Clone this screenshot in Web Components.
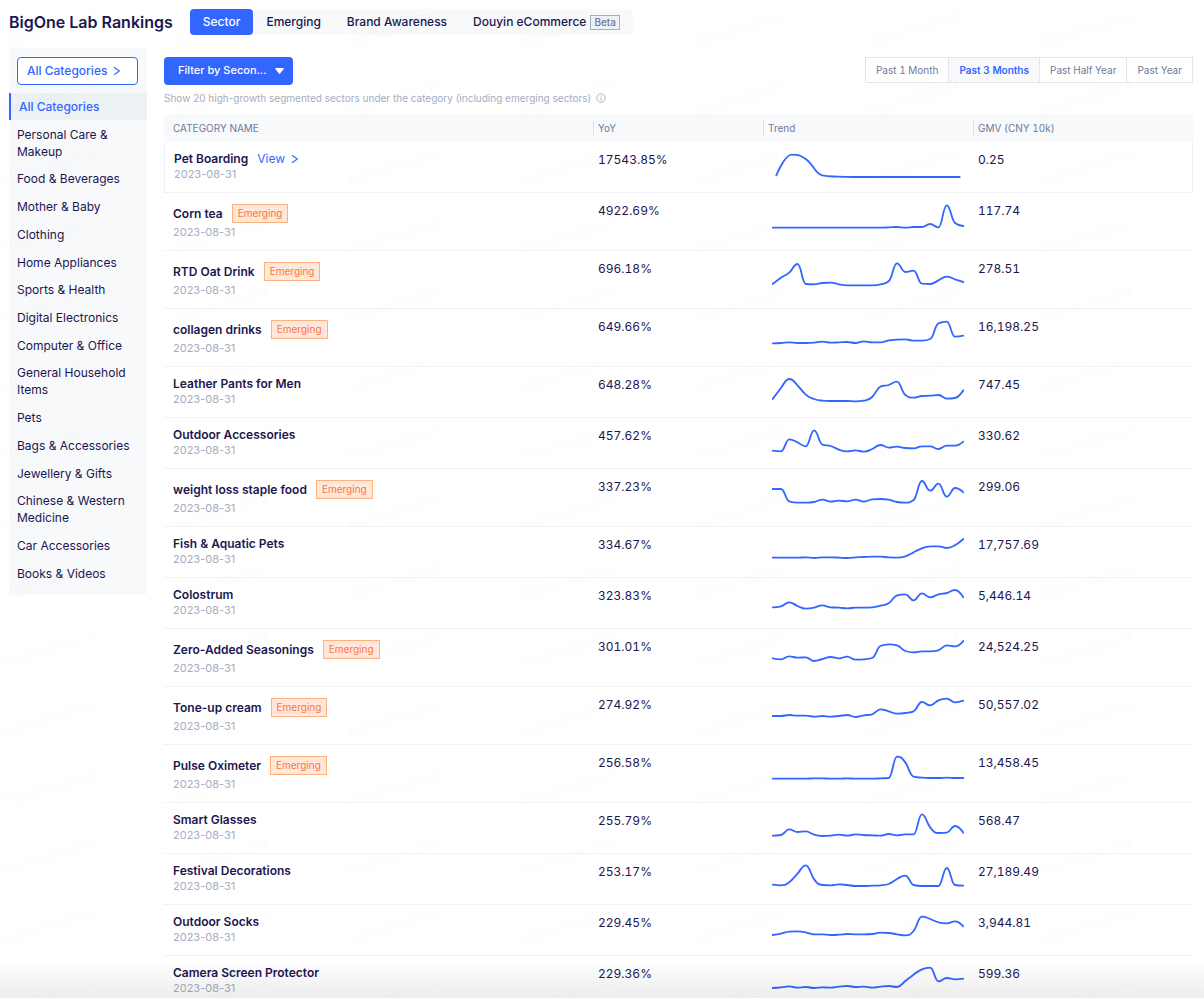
<!DOCTYPE html>
<html lang="en">
<head>
<meta charset="UTF-8">
<meta name="viewport" content="width=device-width, initial-scale=1">
<title>BigOne Lab Rankings</title>
<style>
  :root {
    --primary: #3366ff;
    --text: #1c1650;
    --text-muted: #6e7a9a;
    --text-light: #a6adc2;
    --surface: #f7f9fb;
    --line: #f0f2f5;
  }

  body {
    margin: 0;
    background: #fff;
    color: var(--text);
    font: 12px/16px Inter, "Liberation Sans", sans-serif;
  }
</style>
</head>
<body>
<rankings-page>
  <page-tabs slot="header"></page-tabs>
  <category-menu slot="sidebar"></category-menu>
  <sector-filter slot="toolbar"></sector-filter>
  <period-picker slot="toolbar"></period-picker>
  <ranking-table></ranking-table>
</rankings-page>

<script>
/**
 * RankingsPage
 *
 * Page shell: title and tabs on top, category menu on the left,
 * toolbar, hint and ranking table on the right.
 *
 * Slots: header, sidebar, toolbar, (default)
 */
class RankingsPage extends HTMLElement {
  constructor() {
    super();
    this.attachShadow({ mode: "open" });
  }

  connectedCallback() {
    this.shadowRoot.innerHTML = `
      <style>
        :host {
          display: block;
          position: relative;
          height: 100vh;
          overflow: hidden;
        }

        header {
          display: flex;
          align-items: center;
          gap: 17px;
          padding: 9px 9px 12px;
        }

        h1 {
          margin: 0;
          font-size: 16px;
          line-height: 26px;
          font-weight: 600;
          white-space: nowrap;
        }

        .layout {
          display: grid;
          grid-template-columns: 138px minmax(0, 1fr);
          align-items: start;
          gap: 17px;
          padding: 1px 11px 0 9px;
        }

        main {
          padding-top: 9px;
        }

        .toolbar {
          display: flex;
          justify-content: space-between;
          align-items: flex-start;
        }

        .hint {
          display: flex;
          align-items: center;
          gap: 5px;
          margin: 5px 0 8px;
          color: var(--text-light);
          font-size: 10px;
        }

        .watermark {
          position: absolute;
          inset: 0;
          width: 100%;
          height: 100%;
          pointer-events: none;
        }

        .fade {
          position: absolute;
          inset: auto 0 0;
          height: 40px;
          background: linear-gradient(rgba(0, 0, 0, 0), rgba(0, 0, 0, 0.07));
          pointer-events: none;
        }
      </style>

      <header>
        <h1>BigOne Lab Rankings</h1>
        <slot name="header"></slot>
      </header>
      <div class="layout">
        <slot name="sidebar"></slot>
        <main>
          <div class="toolbar"><slot name="toolbar"></slot></div>
          <p class="hint">
            Show 20 high-growth segmented sectors under the category (including emerging sectors)
            <svg width="10" height="10" viewBox="0 0 10 10" fill="none" stroke="currentColor" aria-hidden="true">
              <circle cx="5" cy="5" r="4.2" stroke-width="0.9"/>
              <path d="M5 4.4v3M5 2.5v1" stroke-width="0.9"/>
            </svg>
          </p>
          <slot></slot>
        </main>
      </div>
      <svg class="watermark" aria-hidden="true">
        <pattern id="mark" width="173" height="69" patternUnits="userSpaceOnUse">
          <text x="4" y="46" transform="rotate(-16 4 46)" font-family="Liberation Serif" font-size="15" fill="#000" fill-opacity="0.01">bigonelab@814</text>
        </pattern>
        <rect width="100%" height="100%" fill="url(#mark)"/>
      </svg>
      <div class="fade"></div>
    `;
  }
}

/**
 * PageTabs
 *
 * Top level navigation between the rankings.
 */
class PageTabs extends HTMLElement {
  constructor() {
    super();
    this.attachShadow({ mode: "open" });
  }

  connectedCallback() {
    this.shadowRoot.innerHTML = `
      <style>
        :host {
          display: block;
        }

        nav {
          display: flex;
          background: var(--surface);
          border-radius: 4px;
        }

        a {
          display: flex;
          align-items: center;
          gap: 4px;
          padding: 0 13px;
          line-height: 26px;
          color: inherit;
          font-weight: 500;
          text-decoration: none;
          white-space: nowrap;
        }

        a.active {
          background: var(--primary);
          color: #fff;
          border-radius: 4px;
        }

        .beta {
          padding: 0 3px;
          border: 1px solid #a3aec4;
          background: #eef1f7;
          color: var(--text-muted);
          font-size: 10px;
          line-height: 13px;
        }
      </style>

      <nav>
        <a class="active" href="#sector">Sector</a>
        <a href="#emerging">Emerging</a>
        <a href="#brand">Brand Awareness</a>
        <a href="#douyin">Douyin eCommerce <span class="beta">Beta</span></a>
      </nav>
    `;
  }
}

const CATEGORIES = [
  "All Categories",
  "Personal Care & Makeup",
  "Food & Beverages",
  "Mother & Baby",
  "Clothing",
  "Home Appliances",
  "Sports & Health",
  "Digital Electronics",
  "Computer & Office",
  "General Household Items",
  "Pets",
  "Bags & Accessories",
  "Jewellery & Gifts",
  "Chinese & Western Medicine",
  "Car Accessories",
  "Books & Videos",
];

/**
 * CategoryMenu
 *
 * Sidebar with the list of first level categories.
 */
class CategoryMenu extends HTMLElement {
  constructor() {
    super();
    this.attachShadow({ mode: "open" });
  }

  connectedCallback() {
    const items = CATEGORIES.map(
      (name, i) => `<li><a href="#"${i === 0 ? ' class="active"' : ""}>${name.replace("&", "&amp;")}</a></li>`
    ).join("");

    this.shadowRoot.innerHTML = `
      <style>
        :host {
          display: block;
          padding: 9px 0 8px;
          background: var(--surface);
          border-radius: 4px;
        }

        button {
          display: flex;
          align-items: center;
          gap: 6px;
          width: 121px;
          height: 28px;
          margin: 0 8px 8px;
          padding: 0 9px;
          border: 1px solid var(--primary);
          border-radius: 4px;
          background: #fff;
          color: var(--primary);
          font: inherit;
          font-weight: 500;
          white-space: nowrap;
        }

        ul {
          display: flex;
          flex-direction: column;
          justify-content: space-between;
          min-height: 494px;
          margin: 0;
          padding: 0;
          list-style: none;
        }

        a {
          display: block;
          padding: 5px 8px;
          line-height: 17px;
          color: inherit;
          text-decoration: none;
        }

        a.active {
          border-left: 2px solid var(--primary);
          background: #ecf1f4;
          color: var(--primary);
          font-weight: 500;
        }
      </style>

      <button type="button">
        All Categories
        <svg width="8" height="10" viewBox="0 0 8 10" fill="none" stroke="currentColor" stroke-width="1.1" aria-hidden="true">
          <path d="M1 1.2L6.4 5L1 8.8"/>
        </svg>
      </button>
      <ul>${items}</ul>
    `;
  }
}

/**
 * SectorFilter
 *
 * Drop-down to filter the table by second level category.
 */
class SectorFilter extends HTMLElement {
  constructor() {
    super();
    this.attachShadow({ mode: "open" });
  }

  connectedCallback() {
    this.shadowRoot.innerHTML = `
      <style>
        :host {
          display: grid;
          grid-template-columns: 129px;
          align-items: center;
          color: #fff;
        }

        select,
        svg {
          grid-area: 1 / 1;
        }

        select {
          appearance: none;
          height: 28px;
          padding: 0 26px 2px 14px;
          border: 0;
          border-radius: 4px;
          background: var(--primary);
          color: inherit;
          font: inherit;
          font-size: 11px;
          font-weight: 500;
        }

        svg {
          justify-self: end;
          margin-right: 9px;
          pointer-events: none;
        }
      </style>

      <select aria-label="Filter by second level category">
        <option>Filter by Secon...</option>
      </select>
      <svg width="9" height="6" viewBox="0 0 9 6" fill="currentColor" aria-hidden="true">
        <path d="M.8 0h7.4c.6 0 .8.6.4 1L5.1 5.4c-.3.4-.9.4-1.2 0L.4 1C0 .6.2 0 .8 0z"/>
      </svg>
    `;
  }
}

/**
 * PeriodPicker
 *
 * Group of buttons for the period of the ranking.
 */
class PeriodPicker extends HTMLElement {
  constructor() {
    super();
    this.attachShadow({ mode: "open" });
  }

  connectedCallback() {
    this.shadowRoot.innerHTML = `
      <style>
        :host {
          display: flex;
          border: 1px solid #e2e5ec;
        }

        button {
          height: 24px;
          padding: 0 10px;
          border: 0;
          border-left: 1px solid #e2e5ec;
          background: #fff;
          color: var(--text-muted);
          font: inherit;
          font-size: 10px;
          font-variant-numeric: tabular-nums;
          white-space: nowrap;
        }

        button:first-of-type {
          border-left: 0;
        }

        button[aria-pressed="true"] {
          background: var(--surface);
          color: var(--primary);
          font-weight: 600;
        }
      </style>

      <button type="button" aria-pressed="false">Past 1 Month</button>
      <button type="button" aria-pressed="true">Past 3 Months</button>
      <button type="button" aria-pressed="false">Past Half Year</button>
      <button type="button" aria-pressed="false">Past Year</button>
    `;
  }
}

const clampBetween = (value, a, b) => Math.min(Math.max(value, Math.min(a, b)), Math.max(a, b));

/**
 * TrendLine
 *
 * Smooth sparkline without axes.
 *
 * Attributes:
 * - points: comma separated heights, measured from the top of the drawing
 * - inset: (optional) space left free at both ends of the line
 */
class TrendLine extends HTMLElement {
  constructor() {
    super();
    this.attachShadow({ mode: "open" });
  }

  connectedCallback() {
    this.shadowRoot.innerHTML = `
      <style>
        :host {
          display: block;
        }

        svg {
          display: block;
        }
      </style>
      <svg width="192" height="40" viewBox="0 0 576 120" fill="none" stroke="#3366ff" stroke-width="5.5" stroke-linecap="round" stroke-linejoin="round" aria-hidden="true">
        <path d="${this.buildPath()}"/>
      </svg>
    `;
  }

  // Bezier through all the points, the handles never leave the range of their segment
  buildPath() {
    const inset = Number(this.getAttribute("inset") || 0);
    const ys = this.getAttribute("points").split(",").map(Number);
    const last = ys.length - 1;
    const step = (572 - inset * 2) / last;
    const reach = step * 0.45;

    const rises = ys.map((y, i) => {
      if (i === 0 || i === last) return 0;
      const after = clampBetween(y + (ys[i + 1] - ys[i - 1]) / 4, y, ys[i + 1]);
      const before = clampBetween(y - (after - y), ys[i - 1], y);
      return y - before;
    });

    let d = `M${2 + inset} ${ys[0]}`;
    for (let i = 1; i <= last; i++) {
      const x = 2 + inset + step * i;
      // the ends have no neighbour, so their handle stays on the point
      const out = i === 1 ? 0 : reach;
      const back = i === last ? 0 : reach;
      d += ` C${x - step + out} ${ys[i - 1] + rises[i - 1]} ${x - back} ${ys[i] - rises[i]} ${x} ${ys[i]}`;
    }
    return d;
  }
}

const DATE = "2023-08-31";

const SECTORS = [
  { name: "Pet Boarding", view: true, yoy: "17543.85%", gmv: "0.25",
    trend: "100,38,54,100,104,105,105,105,105,105,105,105,105" },
  { name: "Corn tea", emerging: true, yoy: "4922.69%", gmv: "117.74",
    trend: "104,104,104,104,104,104,104,104,104,104,104,104,104,104,103,102,104,102,102,93,103,37,90,99" },
  { name: "RTD Oat Drink", emerging: true, yoy: "696.18%", gmv: "278.51",
    trend: "99,80,65,39,99,100,96,95,100,103,103,103,103,100,91,37,63,59,98,99,88,77,85,93" },
  { name: "collagen drinks", emerging: true, yoy: "649.66%", gmv: "16,198.25",
    trend: "103,102,100,102,102,101,98,101,100,99,102,97,100,100,94,92,91,95,95,90,43,38,83,80" },
  { name: "Leather Pants for Men", yoy: "648.28%", gmv: "747.45",
    trend: "96,63,36,55,83,96,101,102,102,102,103,101,90,59,54,44,84,92,87,86,84,95,93,70" },
  { name: "Outdoor Accessories", yoy: "457.62%", gmv: "330.62",
    trend: "98,100,64,73,85,37,80,84,95,100,97,101,93,81,89,86,90,91,85,85,93,83,83,71" },
  { name: "weight loss staple food", emerging: true, yoy: "337.23%", gmv: "299.06",
    trend: "60,60,97,101,101,99,92,98,95,97,92,98,91,90,92,99,101,93,36,65,44,83,57,70" },
  { name: "Fish & Aquatic Pets", yoy: "334.67%", gmv: "17,757.69",
    trend: "92,92,92,92,91,93,91,91,92,93,91,90,89,89,91,92,88,76,64,58,58,63,55,36" },
  { name: "Colostrum", yoy: "323.83%", gmv: "5,446.14",
    trend: "88,85,73,84,92,89,82,88,89,91,89,89,88,83,76,52,49,67,46,58,49,45,36,58" },
  { name: "Zero-Added Seasonings", emerging: true, yoy: "301.01%", gmv: "24,524.25",
    trend: "88,91,82,86,85,96,90,84,88,83,92,91,87,51,46,49,66,70,67,67,64,49,52,36" },
  { name: "Tone-up cream", emerging: true, yoy: "274.92%", gmv: "50,557.02",
    trend: "87,87,84,86,86,89,87,89,87,84,90,85,82,67,73,80,78,73,45,55,40,35,46,41" },
  { name: "Pulse Oximeter", emerging: true, yoy: "256.58%", gmv: "13,458.45",
    trend: "101,101,101,101,101,100,100,101,101,100,101,101,101,100,99,35,52,95,98,99,99,98,99,99" },
  { name: "Smart Glasses", yoy: "255.79%", gmv: "568.47",
    trend: "98,96,79,87,85,95,99,98,95,98,94,96,97,98,93,97,94,94,34,73,90,89,69,89" },
  { name: "Festival Decorations", yoy: "253.17%", gmv: "27,189.49",
    trend: "92,94,85,59,34,76,93,94,91,93,96,96,95,94,90,75,65,93,96,96,96,42,93,95" },
  { name: "Outdoor Socks", yoy: "229.45%", gmv: "3,944.81",
    trend: "90,86,80,79,82,88,88,90,89,87,88,88,87,83,84,88,91,78,35,42,52,55,49,64" },
  { name: "Camera Screen Protector", yoy: "229.36%", gmv: "599.36",
    trend: "96,94,91,95,93,96,94,95,92,90,93,92,95,92,90,93,75,56,40,35,76,66,70,68" },
];

/**
 * RankingTable
 *
 * Table of the fastest growing sectors.
 */
class RankingTable extends HTMLElement {
  constructor() {
    super();
    this.attachShadow({ mode: "open" });
  }

  connectedCallback() {
    this.shadowRoot.innerHTML = `
      <style>
        :host {
          display: block;
        }

        table {
          width: 100%;
          table-layout: fixed;
          border-spacing: 0;
        }

        .yoy { width: 170px; }
        .trend { width: 210px; }
        .gmv { width: 220px; }

        th {
          height: 28px;
          padding: 0;
          background: var(--surface);
          color: var(--text-muted);
          font-size: 10px;
          line-height: 14px;
          font-weight: 400;
          font-variant-numeric: tabular-nums;
          text-align: left;
        }

        th span {
          display: block;
          padding-left: 4px;
          border-left: 1px solid #d9dde6;
        }

        th:first-child span {
          padding-left: 8px;
          border-color: transparent;
        }

        td {
          padding: 10px 0 9px 5px;
          border-bottom: 1px solid var(--line);
          font-variant-numeric: tabular-nums;
          vertical-align: top;
        }

        td:first-child {
          padding: 9px 0 10px 9px;
          font-variant-numeric: normal;
        }

        td.chart {
          padding: 0 0 0 9px;
        }

        tr.current td:first-child {
          border-left: 1px solid var(--line);
        }

        tr.current td:last-child {
          border-right: 1px solid var(--line);
        }

        .name {
          display: flex;
          align-items: center;
          gap: 9px;
          font-weight: 600;
        }

        .name.tagged {
          height: 23px;
        }

        .tag {
          padding: 0 5px;
          border: 1px solid #ffb07c;
          background: #ffe7d9;
          color: #fa7547;
          font-size: 10px;
          line-height: 17px;
          font-weight: 400;
        }

        .name a {
          display: flex;
          align-items: center;
          gap: 6px;
          color: var(--primary);
          font-weight: 400;
          text-decoration: none;
        }

        time {
          display: block;
          color: var(--text-light);
          font-size: 11px;
          line-height: 15px;
        }
      </style>

      <table>
        <thead>
          <tr>
            <th scope="col"><span>CATEGORY NAME</span></th>
            <th scope="col" class="yoy"><span>YoY</span></th>
            <th scope="col" class="trend"><span>Trend</span></th>
            <th scope="col" class="gmv"><span>GMV (CNY 10k)</span></th>
          </tr>
        </thead>
        <tbody>${SECTORS.map((sector) => this.renderRow(sector)).join("")}</tbody>
      </table>
    `;
  }

  renderRow({ name, view, emerging, yoy, gmv, trend }) {
    const link = `
      <a href="#view">View
        <svg width="8" height="10" viewBox="0 0 8 10" fill="none" stroke="currentColor" stroke-width="1.1" aria-hidden="true">
          <path d="M1 1.2L6.4 5L1 8.8"/>
        </svg>
      </a>`;

    return `
      <tr${view ? ' class="current"' : ""}>
        <td>
          <div class="name${emerging ? " tagged" : ""}">
            ${name.replace("&", "&amp;")}
            ${view ? link : ""}
            ${emerging ? '<span class="tag">Emerging</span>' : ""}
          </div>
          <time datetime="${DATE}">${DATE}</time>
        </td>
        <td>${yoy}</td>
        <td class="chart"><trend-line points="${trend}"${view ? ' inset="11"' : ""}></trend-line></td>
        <td>${gmv}</td>
      </tr>`;
  }
}

customElements.define("rankings-page", RankingsPage);
customElements.define("page-tabs", PageTabs);
customElements.define("category-menu", CategoryMenu);
customElements.define("sector-filter", SectorFilter);
customElements.define("period-picker", PeriodPicker);
customElements.define("trend-line", TrendLine);
customElements.define("ranking-table", RankingTable);
</script>
</body>
</html>
